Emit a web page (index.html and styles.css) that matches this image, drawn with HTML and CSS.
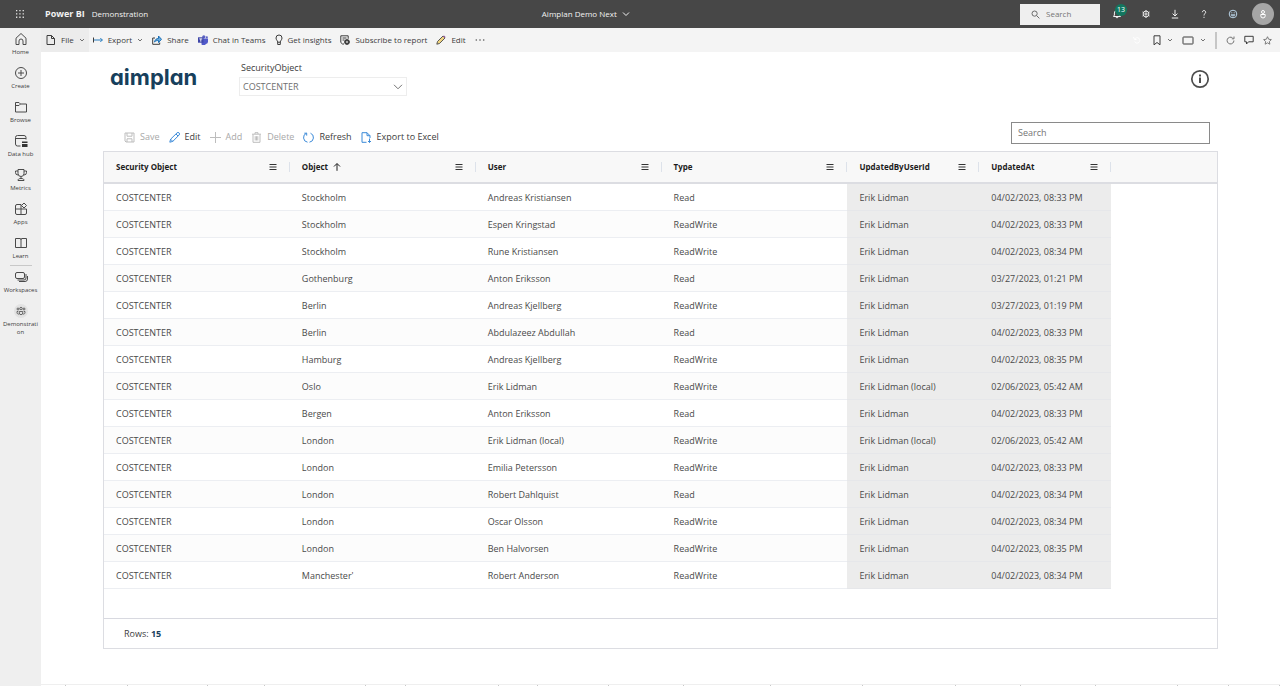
FILE: index.html
```html
<!DOCTYPE html>
<html lang="en">
<head>
    <meta charset="UTF-8">
    <meta name="viewport" content="width=device-width, initial-scale=1.0">
    <title>Aimplan Demo Next - Power BI</title>
    <link rel="stylesheet" href="styles.css">
</head>
<body>
    <header class="topbar">
        <div class="brand">
            <button class="waffle" aria-label="App launcher">
                <svg width="10" height="10" viewBox="0 0 10 10" fill="#e6e6e6"><path d="M1 1h1.3v1.3H1zM4.3 1h1.3v1.3H4.3zM7.6 1h1.3v1.3H7.6zM1 4.3h1.3v1.3H1zM4.3 4.3h1.3v1.3H4.3zM7.6 4.3h1.3v1.3H7.6zM1 7.6h1.3v1.3H1zM4.3 7.6h1.3v1.3H4.3zM7.6 7.6h1.3v1.3H7.6z"/></svg>
            </button>
            <strong>Power BI</strong>
            <span class="workspace">Demonstration</span>
        </div>
        <button class="report-name">Aimplan Demo Next
            <svg width="8" height="8" viewBox="0 0 8 8" class="line"><path d="M1 2.5l3 3 3-3"/></svg>
        </button>
        <div class="top-actions">
            <label class="top-search">
                <svg width="9" height="9" viewBox="0 0 9 9" class="line"><circle cx="3.6" cy="3.6" r="2.6"/><path d="M5.6 5.6L8.4 8.4"/></svg>
                <input type="text" placeholder="Search" aria-label="Search Power BI">
            </label>
            <button aria-label="Notifications" class="bell">
                <svg width="10" height="10" viewBox="0 0 10 10" class="line"><path d="M1.5 7.5h7L7.6 6V4a2.6 2.6 0 0 0-5.2 0v2zM4 7.8a1 1 0 0 0 2 0"/></svg>
                <span class="badge">13</span>
            </button>
            <button aria-label="Settings">
                <svg width="10" height="10" viewBox="0 0 10 10" class="line"><circle cx="5" cy="5" r="2.9"/><circle cx="5" cy="5" r="1.1"/><path d="M5 1v1.2M5 7.8V9M1.5 3l1 .6M7.5 6.4l1 .6M1.5 7l1-.6M7.5 3.6l1-.6"/></svg>
            </button>
            <button aria-label="Download">
                <svg width="10" height="10" viewBox="0 0 10 10" class="line"><path d="M5 .8v6M2.6 4.6L5 7l2.4-2.4M1.8 9h6.4"/></svg>
            </button>
            <button aria-label="Help">
                <svg width="10" height="10" viewBox="0 0 10 10" class="line"><path d="M3.3 3.2a1.7 1.7 0 1 1 2.6 1.5C5.2 5.1 5 5.5 5 6.5M5 7.8v1.1"/></svg>
            </button>
            <button aria-label="Feedback">
                <svg width="10" height="10" viewBox="0 0 10 10" fill="none" stroke="#b9d3e6"><circle cx="5" cy="5" r="3.8"/><path d="M3.3 3.8h1M5.7 3.8h1M3 5.8a2.3 2.3 0 0 0 4 0z"/></svg>
            </button>
            <button aria-label="Account" class="avatar">
                <svg width="10" height="10" viewBox="0 0 10 10" class="line"><circle cx="5" cy="3" r="1.5"/><path d="M2.8 5.5h4.4v1.300a2.200 2.200 0 0 1-4.400 0z"/></svg>
            </button>
        </div>
    </header>

    <div class="shell">
        <nav class="sidebar">
            <a href="#"><svg viewBox="0 0 14 14"><path d="M2 6.2L7 1.5l5 4.7V12.500H9V9a2 2 0 0 0-4 0v3.500H2z"/></svg>Home</a>
            <a href="#"><svg viewBox="0 0 14 14"><circle cx="7" cy="7" r="5.5"/><path d="M7 4v6M4 7h6"/></svg>Create</a>
            <a href="#"><svg viewBox="0 0 14 14"><path d="M1.5 2.5H5L6.5 4h6v8h-11zM1.5 5.5H5L6.5 4"/></svg>Browse</a>
            <a href="#"><svg viewBox="0 0 14 14"><path d="M6.5 12H3.5a2 2 0 0 1-2-2V3.5a2 2 0 0 1 2-2H10a2 2 0 0 1 2 2V5.5M1.5 4.5H12"/><path class="solid" d="M8 7.5h5.5V9H8zM8 10h5.5v3H8z"/></svg>Data hub</a>
            <a href="#"><svg viewBox="0 0 14 14"><path d="M4 1.5h6v4a3 3 0 0 1-6 0zM4 3H1.5v1.5A2.5 2.5 0 0 0 4 7M10 3h2.5v1.5A2.5 2.5 0 0 1 10 7M7 8.5v2M4 12.5c0-1.5 1-2 3-2s3 .5 3 2z"/></svg>Metrics</a>
            <a href="#"><svg viewBox="0 0 14 14"><path d="M7 7V2.5H3A1.5 1.5 0 0 0 1.5 4v7A1.5 1.5 0 0 0 3 12.5h8a1.5 1.5 0 0 0 1.5-1.5V7H1.5M7 7v5.5"/><path d="M10 1l2.5 2.5L10 6 7.5 3.5z"/></svg>Apps</a>
            <a href="#"><svg viewBox="0 0 14 14"><path d="M7 3v9M1.5 2.5H6a1 1 0 0 1 1 1 1 1 0 0 1 1-1h4.5v9h-11z"/></svg>Learn</a>
            <hr>
            <a href="#"><svg viewBox="0 0 14 14"><rect x="1.5" y="2.500" width="9" height="6" rx="1.5"/><path d="M3.5 10H10a2 2 0 0 0 2-2V4M5 11.500h6a2.500 2.500 0 0 0 2.500-2.500V6"/></svg>Workspaces</a>
            <a href="#"><svg viewBox="0 0 14 14" class="round"><circle cx="7" cy="4.5" r="1.2"/><circle cx="4" cy="5" r="1"/><circle cx="10" cy="5" r="1"/><path d="M5.3 7.5h3.4V9a1.7 1.7 0 0 1-3.4 0zM5 10a1.5 1.5 0 0 1-2-1.5v-1h1.2M9 10a1.5 1.5 0 0 0 2-1.5v-1H9.8"/></svg>Demonstrati<br>on</a>
        </nav>

        <div class="main">
            <div class="menubar">
                <button class="file">
                    <svg width="10" height="12" viewBox="0 0 10 12" class="line"><path d="M1 1.5h4.5L8.5 4.5v6H1zM5.500 1.500v3h3"/></svg>File
                    <svg width="6" height="6" viewBox="0 0 6 6" class="line thin"><path d="M1 2l2 2 2-2"/></svg>
                </button>
                <button class="export">
                    <svg width="10" height="10" viewBox="0 0 10 10" class="line"><path d="M.5 2.500v5"/><path stroke="#2b7fc0" d="M1 5h8.500M7.300 3l2 2-2 2"/></svg>Export
                    <svg width="6" height="6" viewBox="0 0 6 6" class="line thin"><path d="M1 2l2 2 2-2"/></svg>
                </button>
                <button>
                    <svg width="10" height="10" viewBox="0 0 10 10" class="line"><path d="M3 3H.7v6.300h7V7.500"/><path stroke="#1c6fb5" fill="#69aee0" d="M2.500 7c.5-2.500 2-3.500 4-3.500V1l3 3.300-3 3.200V5.500c-1.700 0-3 .3-4 1.500z"/></svg>Share
                </button>
                <button>
                    <svg width="10" height="10" viewBox="0 0 10 10"><circle cx="5.800" cy="1.800" r="1.600" fill="#5b62c4"/><circle cx="8.800" cy="2.300" r="1.100" fill="#5b62c4"/><path fill="#5059c9" d="M3.500 3.500H10v3.300a2.200 2.200 0 0 1-2 2.200 3.200 3.200 0 0 1-4.500.5z"/><path fill="#3e46a8" d="M0 2.300h5.500v5.400H0z"/><path stroke="#fff" stroke-width=".9" d="M1.300 3.900h3M2.800 3.900v2.800"/></svg>Chat in Teams
                </button>
                <button>
                    <svg width="8" height="12" viewBox="0 0 8 12" class="line"><path d="M2.700 8.200C2.700 6.500 1 6 1 4a3 3 0 0 1 6 0c0 2-1.700 2.500-1.700 4.200zM2.700 8v2.500h2.600V8"/></svg>Get insights
                </button>
                <button>
                    <svg width="10" height="10" viewBox="0 0 10 10" class="line"><path d="M4 9H2.500L.8 7.500V.8h7.400v3M2.500 3h4M2.500 5H4.500"/><circle cx="7" cy="7" r="2.400" fill="#333"/><path stroke="#fff" stroke-width=".7" d="M7 5.800v2.400M5.800 7h2.400"/></svg>Subscribe to report
                </button>
                <button>
                    <svg width="10" height="10" viewBox="0 0 10 10"><path d="M.8 9.200l.7-2.700L7 1l2 2-5.500 5.500z" fill="#f0d37e" stroke="#4a4a4a" stroke-width=".9"/><path d="M6.800 1.200L8 .4 9.600 2 8.800 3.200z" fill="#8d5a94"/></svg>Edit
                </button>
                <button aria-label="More options">
                    <svg width="10" height="10" viewBox="0 0 10 10" fill="#555"><circle cx="1.300" cy="5" r=".8"/><circle cx="5" cy="5" r=".8"/><circle cx="8.700" cy="5" r=".8"/></svg>
                </button>
                <div class="menu-right">
                    <svg width="8" height="8" viewBox="0 0 8 8" fill="none" stroke="#fff"><path d="M.5 1l1 2.500h2M1.700 3.300a2.700 2.700 0 1 1 0 2.200"/></svg>
                    <button aria-label="Bookmarks">
                        <svg width="8" height="11" viewBox="0 0 8 11" class="line"><path d="M1 .8h6v9L4 7.500 1 9.800z"/></svg>
                        <svg width="6" height="6" viewBox="0 0 6 6" class="line thin"><path d="M1 2l2 2 2-2"/></svg>
                    </button>
                    <button aria-label="View">
                        <svg width="12" height="9" viewBox="0 0 12 9" class="line"><rect x="1" y="1" width="10" height="7" rx=".5"/></svg>
                        <svg width="6" height="6" viewBox="0 0 6 6" class="line thin"><path d="M1 2l2 2 2-2"/></svg>
                    </button>
                    <span class="split"></span>
                    <button aria-label="Reload">
                        <svg width="9" height="9" viewBox="0 0 9 9" class="line thin"><path d="M7.900 4.500A3.400 3.400 0 1 1 6.500 1.800M8 .5v2.300H5.800"/></svg>
                    </button>
                    <button aria-label="Comments">
                        <svg width="10" height="10" viewBox="0 0 10 10" class="line"><path d="M.8 1.300h8.400v5.500H4.500L2.500 9V6.800H.8z"/></svg>
                    </button>
                    <button aria-label="Favorite">
                        <svg width="9" height="9" viewBox="0 0 10 10" class="line thin"><path d="M5 .8l1.300 2.800 3 .4-2.200 2.100.5 3L5 7.600 2.400 9.100l.5-3L.7 4l3-.4z"/></svg>
                    </button>
                </div>
            </div>

            <main class="report">
                <div class="report-head">
                    <span class="logo">aimplan</span>
                    <div class="slicer">
                        <label for="securityObject">SecurityObject</label>
                        <div class="select-wrap">
                            <select id="securityObject"><option>COSTCENTER</option></select>
                            <svg width="10" height="8" viewBox="0 0 10 8" class="line thin"><path d="M1 1.800l4 4 4-4"/></svg>
                        </div>
                    </div>
                    <button class="info" aria-label="Information">
                        <svg width="20" height="20" viewBox="0 0 20 20" fill="none" stroke="#4d4d4d" stroke-width="1.700"><circle cx="10" cy="10" r="8.200"/><path stroke-width="2" d="M10 8.500v5.500M10 5.500v2"/></svg>
                    </button>
                </div>

                <div class="toolbar">
                    <button disabled>
                        <svg width="11" height="11" viewBox="0 0 11 11"><path d="M1 1h9v9H2L1 9zM3 1v3.200h5V1M3 10V6.800h5V10"/></svg>Save
                    </button>
                    <button>
                        <svg width="11" height="11" viewBox="0 0 11 11"><path d="M.8 10.200l.8-3L8 .9a1.300 1.300 0 0 1 2.100 2.100L3.800 9.400zM7 2l2 2M1.600 7.200l2.200 2.200"/></svg>Edit
                    </button>
                    <button disabled>
                        <svg width="11" height="11" viewBox="0 0 11 11"><path d="M5.500 0v11M0 5.500h11"/></svg>Add
                    </button>
                    <button disabled>
                        <svg width="11" height="11" viewBox="0 0 11 11"><path d="M1 2.200h9M4 2V.7h3V2M2 2.500v7.800h7V2.500M4.200 4.200v4.300M5.500 4.200v4.300M6.800 4.200v4.300"/></svg>Delete
                    </button>
                    <button>
                        <svg width="11" height="11" viewBox="0 0 11 11"><path d="M3.500 1.200a4.700 4.700 0 0 0 1 9M7.500 1.200a4.700 4.700 0 0 1-1 9M1.300 1.200h2.400v2.400"/></svg>Refresh
                    </button>
                    <button>
                        <svg width="11" height="11" viewBox="0 0 11 11"><path d="M5.500 10.300H1V.7h5L9 3.700V6M6 .7v3h3M8.500 6.500v4M7 9l1.500 1.500L10 9"/></svg>Export to Excel
                    </button>
                    <input type="text" class="grid-search" placeholder="Search" aria-label="Search rows">
                </div>

                <section class="grid">
                    <table id="dataTable">
                        <thead>
                            <tr></tr>
                        </thead>
                        <tbody></tbody>
                    </table>
                    <p class="grid-footer">Rows: <b id="rowCount"></b></p>
                </section>
            </main>
            <div class="page-tabs" id="pageTabs"></div>
        </div>
    </div>

    <script>
        const columns = ["Security Object", "Object", "User", "Type", "UpdatedByUserId", "UpdatedAt"];
        const rows = [
            ["COSTCENTER", "Stockholm", "Andreas Kristiansen", "Read", "Erik Lidman", "04/02/2023, 08:33 PM"],
            ["COSTCENTER", "Stockholm", "Espen Kringstad", "ReadWrite", "Erik Lidman", "04/02/2023, 08:33 PM"],
            ["COSTCENTER", "Stockholm", "Rune Kristiansen", "ReadWrite", "Erik Lidman", "04/02/2023, 08:34 PM"],
            ["COSTCENTER", "Gothenburg", "Anton Eriksson", "Read", "Erik Lidman", "03/27/2023, 01:21 PM"],
            ["COSTCENTER", "Berlin", "Andreas Kjellberg", "ReadWrite", "Erik Lidman", "03/27/2023, 01:19 PM"],
            ["COSTCENTER", "Berlin", "Abdulazeez Abdullah", "Read", "Erik Lidman", "04/02/2023, 08:33 PM"],
            ["COSTCENTER", "Hamburg", "Andreas Kjellberg", "ReadWrite", "Erik Lidman", "04/02/2023, 08:35 PM"],
            ["COSTCENTER", "Oslo", "Erik Lidman", "ReadWrite", "Erik Lidman (local)", "02/06/2023, 05:42 AM"],
            ["COSTCENTER", "Bergen", "Anton Eriksson", "Read", "Erik Lidman", "04/02/2023, 08:33 PM"],
            ["COSTCENTER", "London", "Erik Lidman (local)", "ReadWrite", "Erik Lidman (local)", "02/06/2023, 05:42 AM"],
            ["COSTCENTER", "London", "Emilia Petersson", "ReadWrite", "Erik Lidman", "04/02/2023, 08:33 PM"],
            ["COSTCENTER", "London", "Robert Dahlquist", "Read", "Erik Lidman", "04/02/2023, 08:34 PM"],
            ["COSTCENTER", "London", "Oscar Olsson", "ReadWrite", "Erik Lidman", "04/02/2023, 08:34 PM"],
            ["COSTCENTER", "London", "Ben Halvorsen", "ReadWrite", "Erik Lidman", "04/02/2023, 08:35 PM"],
            ["COSTCENTER", "Manchester'", "Robert Anderson", "ReadWrite", "Erik Lidman", "04/02/2023, 08:34 PM"]
        ];
        const tabSizes = [24, 62, 80, 57, 102, 39, 94, 38, 71, 75, 88, 92, 93, 65, 75, 83, 50, 51];

        const menuIcon = '<svg width="8" height="8" viewBox="0 0 8 8" class="line"><path d="M.5 1.500h7M.5 4h7M.5 6.500h7"/></svg>';
        const sortIcon = '<svg width="8" height="8" viewBox="0 0 8 8" class="line sort"><path d="M4 .8v7M1 3.500l3-3 3 3"/></svg>';

        let headRow = document.querySelector("#dataTable thead tr");
        columns.forEach(name => {
            let th = document.createElement("th");
            th.innerHTML = `<div class="head-cell">${name}${name === "Object" ? sortIcon : ""}<button aria-label="${name} menu">${menuIcon}</button></div>`;
            headRow.appendChild(th);
        });
        headRow.appendChild(document.createElement("td"));

        let tbody = document.querySelector("#dataTable tbody");
        rows.forEach(row => {
            let tr = document.createElement("tr");
            row.forEach(cell => {
                let td = document.createElement("td");
                td.textContent = cell;
                tr.appendChild(td);
            });
            tr.appendChild(document.createElement("td"));
            tbody.appendChild(tr);
        });
        document.getElementById("rowCount").textContent = rows.length;

        tabSizes.forEach(size => {
            let tab = document.createElement("span");
            tab.style.flexGrow = size;
            document.getElementById("pageTabs").appendChild(tab);
        });
    </script>
</body>
</html>
```
FILE: styles.css
```css
* { box-sizing: border-box; }
body { margin: 0; min-height: 100vh; display: flex; flex-direction: column; font: 9px/12px "Open Sans", "Noto Sans", sans-serif; color: #3c3c3c; background: #fff; }
button { display: flex; align-items: center; padding: 0; border: 0; background: none; font: inherit; color: inherit; white-space: nowrap; }
input, select { font: inherit; color: inherit; }
svg { flex: none; display: block; }
.line { fill: none; stroke: currentColor; stroke-width: 1; }
.thin { opacity: .7; }

/* top bar */
.topbar { display: grid; grid-template-columns: 5fr auto 6fr; align-items: center; height: 28px; background: #474747; color: #f2f2f2; }
.brand { display: flex; align-items: center; }
.waffle { width: 45px; padding-left: 15px; }
.workspace { margin-left: 7px; font-size: 8px; }
.report-name { gap: 5px; font-size: 8px; }
.top-actions { display: flex; align-items: center; justify-content: flex-end; padding-right: 6px; }
.top-actions button { width: 29px; justify-content: center; }
.top-search { display: flex; align-items: center; gap: 6px; width: 80px; height: 21px; margin-right: 2px; padding: 0 11px; background: #efefef; color: #6b6b6b; font-size: 8px; }
.top-search input { width: 100%; min-width: 0; padding: 0; border: 0; background: none; }
.bell { position: relative; }
.badge { position: absolute; top: -5px; left: 13px; width: 12px; height: 12px; border-radius: 50%; background: #12775f; color: #fff; font-size: 7px; text-align: center; }
.top-actions .avatar { width: 22px; height: 22px; margin-left: 5px; border-radius: 50%; background: #a6a6a6; color: #fff; }

.shell { flex: 1; display: flex; }

/* left navigation */
.sidebar { width: 41px; padding-top: 4px; background: #efefef; }
.sidebar a { display: block; height: 34px; color: #3c3c3c; font-size: 6px; line-height: 8px; text-align: center; text-decoration: none; white-space: nowrap; }
.sidebar svg { width: 14px; height: 14px; margin: 0 auto 2px; fill: none; stroke: #4a4a4a; stroke-width: 1; }
.sidebar .solid { fill: #333; stroke: none; }
.sidebar .round { border-radius: 50%; background: #e2e2e2; stroke-width: .8; }
.sidebar hr { width: 22px; margin: -5px auto 4px; border: 0; border-top: 1px solid #c8c8c8; }

.main { flex: 1; min-width: 0; display: flex; flex-direction: column; }

/* report menu */
.menubar { display: flex; align-items: stretch; gap: 9px; height: 24px; background: #f4f4f4; font-size: 8px; }
.menubar button { gap: 5px; }
.menubar .file { padding: 0 4px 0 5px; background: #ececec; }
.menubar .export { margin-left: -5px; }
.menu-right { display: flex; align-items: center; gap: 9px; margin-left: auto; padding-right: 8px; }
.menu-right > svg { margin-right: 3px; }
.menu-right button { gap: 6px; }
.split { width: 2px; height: 17px; background: #c6c6c6; }

/* report page */
.report { flex: 1; padding: 8px 62px 0 62px; }
.report-head { display: flex; align-items: flex-start; height: 61px; padding-left: 7px; }
.logo { width: 129px; padding-top: 2px; color: #173f5c; font: 700 22px/30px Inter, sans-serif; font-feature-settings: "cv11"; }
.slicer { width: 168px; }
.slicer label { display: block; padding: 2px 2px 3px; }
.select-wrap { position: relative; }
.select-wrap select { appearance: none; width: 100%; height: 19px; padding: 0 3px; border: 1px solid #ededed; background: #fff; color: #6e6e6e; }
.select-wrap svg { position: absolute; top: 6px; right: 4px; pointer-events: none; }
.info { margin: 9px 8px 0 auto; }

.toolbar { display: flex; align-items: center; gap: 9px; height: 30px; padding: 2px 8px 0 21px; }
.toolbar button { gap: 5px; }
.toolbar svg { fill: none; stroke: #3b8ad8; stroke-width: 1; }
.toolbar button:disabled { color: #a8a8a8; }
.toolbar button:disabled svg { stroke: #bdbdbd; }
.grid-search { width: 199px; height: 22px; margin: 0 0 9px auto; padding: 0 6px; border: 1px solid #8a8a8a; }

.grid { border: 1px solid #dcdde2; }
#dataTable { width: 100%; table-layout: fixed; border-collapse: separate; border-spacing: 0; }
th, td { height: 27px; padding: 0 0 0 12px; border-bottom: 1px solid #eceef2; text-align: left; white-space: nowrap; color: #4a4a4a; }
th { width: 16.7%; color: #1c1c1c; font-size: 8px; font-weight: 700; }
th:nth-child(n+5) { width: 11.85%; }
thead th, thead td { height: 32px; background: #f8f8f8; border-bottom: 2px solid #dcdde2; }
tbody td { padding-top: 2px; }
tbody tr:nth-child(even) td { background: #fcfcfc; }
tbody tr td:nth-child(n+5) { background: #ececec; border-bottom-color: #e6e7ea; }
tbody tr:nth-child(n) td:last-child { background: #fff; border-bottom: 0; }
.head-cell { display: flex; align-items: center; height: 10px; border-right: 1px solid #dde2ea; }
.head-cell button { margin: 0 12px 0 auto; color: #333; }
.sort { margin-left: 5px; }
.grid-footer { margin: 29px 0 0; padding: 9px 20px 8px; border-top: 1px solid #d8d9e0; }
.grid-footer b { color: #173f5c; }

.page-tabs { display: flex; height: 2px; border-top: 1px solid #efefef; }
.page-tabs span { flex-basis: 0; border-right: 1px solid #c8c8c8; }
```
